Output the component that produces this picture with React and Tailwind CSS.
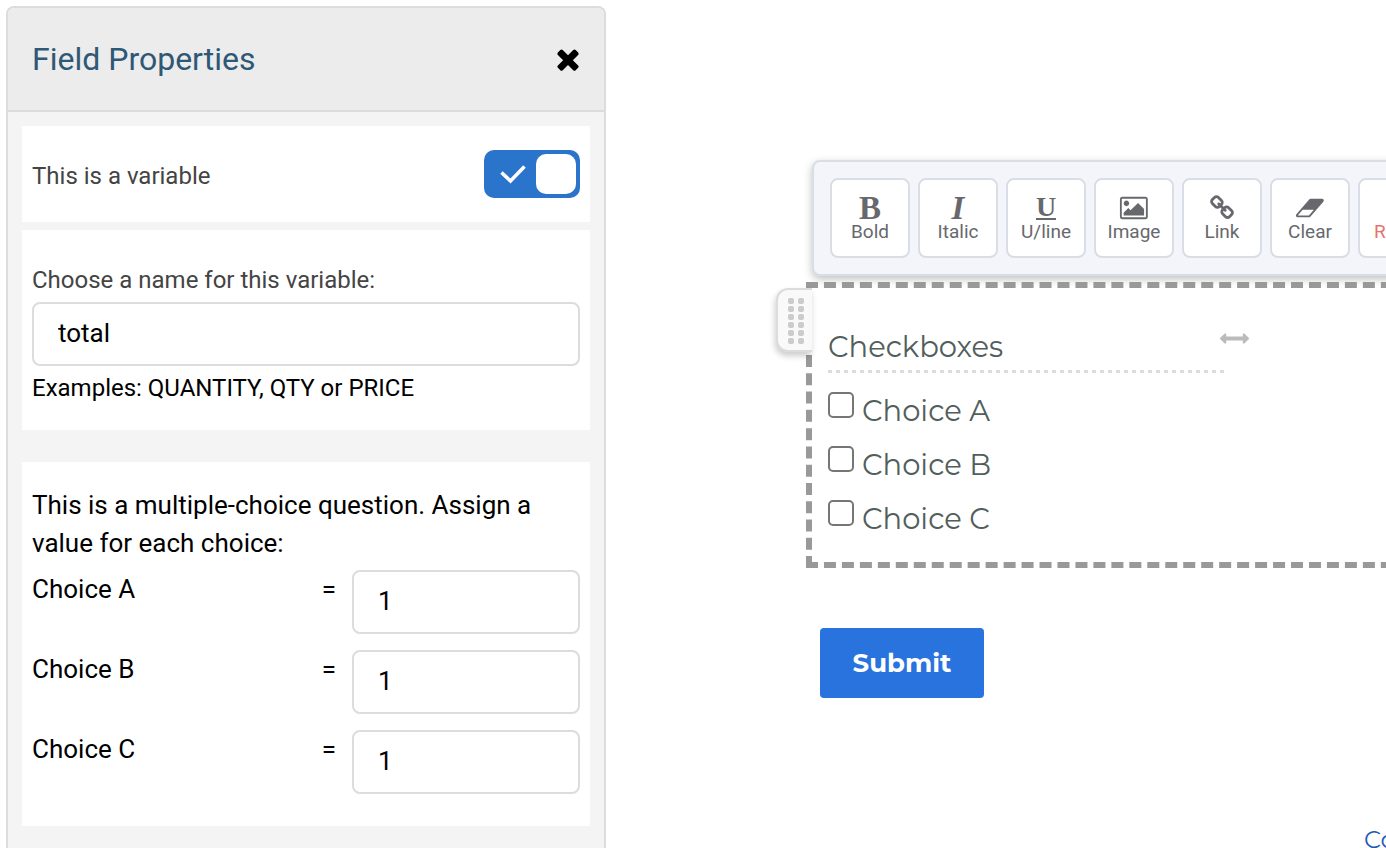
import React, { useState } from "react";
import { FaUndo } from "react-icons/fa";

const iconPaths = {
  times: {
    box: "0 0 1792 1792",
    d: "M1490 1322q0 40-28 68l-136 136q-28 28-68 28t-68-28l-294-294-294 294q-28 28-68 28t-68-28l-136-136q-28-28-28-68t28-68l294-294-294-294q-28-28-28-68t28-68l136-136q28-28 68-28t68 28l294 294 294-294q28-28 68-28t68 28l136 136q28 28 28 68t-28 68l-294 294 294 294q28 28 28 68z",
  },
  image: {
    box: "0 0 2048 1792",
    d: "M704 576q0 80-56 136t-136 56-136-56-56-136 56-136 136-56 136 56 56 136zm1024 384v448h-1408v-192l320-320 160 160 512-512zm96-704h-1600q-13 0-22.5 9.5t-9.5 22.5v1216q0 13 9.5 22.5t22.5 9.5h1600q13 0 22.5-9.5t9.5-22.5v-1216q0-13-9.5-22.5t-22.5-9.5zm160 32v1216q0 66-47 113t-113 47h-1600q-66 0-113-47t-47-113v-1216q0-66 47-113t113-47h1600q66 0 113 47t47 113z",
  },
  link: {
    box: "0 0 1792 1792",
    d: "M1520 1216q0-40-28-68l-208-208q-28-28-68-28-42 0-72 32 3 3 19 18.5t21.5 21.5 15 19 13 25.5 3.5 27.5q0 40-28 68t-68 28q-15 0-27.5-3.5t-25.5-13-19-15-21.5-21.5-18.5-19q-33 31-33 73 0 40 28 68l206 207q27 27 68 27 40 0 68-26l147-146q28-28 28-67zm-703-705q0-40-28-68l-206-207q-28-28-68-28-39 0-68 27l-147 146q-28 28-28 67 0 40 28 68l208 208q27 27 68 27 42 0 72-31-3-3-19-18.5t-21.5-21.5-15-19-13-25.5-3.5-27.5q0-40 28-68t68-28q15 0 27.5 3.5t25.5 13 19 15 21.5 21.5 18.5 19q33-31 33-73zm895 705q0 120-85 203l-147 146q-83 83-203 83-121 0-204-85l-206-207q-83-83-83-203 0-123 88-209l-88-88q-86 88-208 88-120 0-204-84l-208-208q-84-84-84-204t85-203l147-146q83-83 203-83 121 0 204 85l206 207q83 83 83 203 0 123-88 209l88 88q86-88 208-88 120 0 204 84l208 208q84 84 84 204z",
  },
  eraser: {
    box: "0 0 2048 1792",
    d: "M960 1408l336-384h-768l-336 384h768zm1013-1077q15 34 9.5 71.5t-30.5 65.5l-896 1024q-38 44-96 44h-768q-38 0-69.5-20.5t-47.5-54.5q-15-34-9.5-71.5t30.5-65.5l896-1024q38-44 96-44h768q38 0 69.5 20.5t47.5 54.5z",
  },
  arrows: {
    box: "0 0 1792 1792",
    d: "M1792 896q0 26-19 45l-256 256q-19 19-45 19t-45-19-19-45v-128h-1024v128q0 26-19 45t-45 19-45-19l-256-256q-19-19-19-45t19-45l256-256q19-19 45-19t45 19 19 45v128h1024v-128q0-26 19-45t45-19 45 19l256 256q19 19 19 45z",
  },
};

const Icon = ({ name, className }) => (
  <svg
    viewBox={iconPaths[name].box}
    className={className}
    fill="currentColor"
    aria-hidden="true"
  >
    <path d={iconPaths[name].d} />
  </svg>
);

const serif = "font-['Liberation_Serif',serif] font-bold leading-6";

const tools = [
  { label: "Bold", icon: <span className={`${serif} text-[33px]`}>B</span> },
  {
    label: "Italic",
    icon: <span className={`${serif} text-[33px] italic`}>I</span>,
  },
  {
    label: "U/line",
    icon: (
      <span className={`${serif} border-b-2 text-[28px] leading-[22px]`}>
        U
      </span>
    ),
  },
  { label: "Image", icon: <Icon name="image" className="h-[26px]" /> },
  { label: "Link", icon: <Icon name="link" className="h-[26px]" /> },
  { label: "Clear", icon: <Icon name="eraser" className="h-[26px]" /> },
  { label: "Reset", icon: <FaUndo size={20} />, danger: true },
];

const choices = ["Choice A", "Choice B", "Choice C"];

const inputStyle =
  "block h-16 w-full min-w-0 rounded-lg border-2 border-[#dcdcdc] bg-white px-6 pb-0.5 text-[26px] text-black outline-none";

const FieldProperties = () => {
  const [isVariable, setIsVariable] = useState(true);
  const [name, setName] = useState("total");
  const [values, setValues] = useState(["1", "1", "1"]);

  const updateValue = (index, value) => {
    setValues(values.map((v, i) => (i === index ? value : v)));
  };

  return (
    <aside className="mt-1.5 ml-1.5 w-[600px] shrink-0 rounded-t-lg border-2 border-b-0 border-[#dcdcdc] bg-[#f4f4f4]">
      <header className="flex h-[104px] items-center justify-between rounded-t-md border-b-2 border-[#dcdcdc] bg-[#ececec] px-6">
        <h2 className="text-[32px] text-[#2e5876]">Field Properties</h2>
        <button type="button" aria-label="Close" className="-mr-1 text-black">
          <Icon name="times" className="size-8" />
        </button>
      </header>

      <div className="p-3.5">
        <section className="flex h-24 items-center justify-between bg-white px-2.5">
          <label htmlFor="is-variable" className="pt-1 text-2xl text-[#444]">
            This is a variable
          </label>
          <label className="relative flex h-12 w-24 cursor-pointer items-center justify-between rounded-[10px] bg-[#2a74cc] p-1">
            <input
              id="is-variable"
              type="checkbox"
              className="absolute inset-0 opacity-0"
              checked={isVariable}
              onChange={(e) => setIsVariable(e.target.checked)}
            />
            <svg
              viewBox="0 0 26 20"
              className="ml-3 w-[26px]"
              fill="none"
              stroke="#fff"
              strokeWidth="3.6"
              aria-hidden="true"
            >
              <path d="M1.5 8.5 L10.5 17 L24.5 2.5" />
            </svg>
            <span className="size-10 rounded-[10px] bg-white" />
          </label>
        </section>

        <section className="mt-2 bg-white px-2.5 pt-8 pb-6">
          <label
            htmlFor="variable-name"
            className="mb-1 block text-2xl leading-9 text-[#444]"
          >
            Choose a name for this variable:
          </label>
          <input
            id="variable-name"
            type="text"
            className={inputStyle}
            value={name}
            onChange={(e) => setName(e.target.value)}
          />
          <p className="mt-1 text-2xl leading-9">
            Examples: QUANTITY, QTY or PRICE
          </p>
        </section>

        <section className="mt-8 bg-white px-2.5 pt-6 pb-8 text-[26px] leading-[38px]">
          <p className="mb-2">
            This is a multiple-choice question. Assign a value for each choice:
          </p>
          <div className="space-y-4">
            {choices.map((choice, index) => (
              <div key={choice} className="flex">
                <label htmlFor={`value-${index}`} className="flex-1">
                  {choice}
                </label>
                <span className="w-[46px] text-center">=</span>
                <div className="w-[228px]">
                  <input
                    id={`value-${index}`}
                    type="text"
                    className={inputStyle}
                    value={values[index]}
                    onChange={(e) => updateValue(index, e.target.value)}
                  />
                </div>
              </div>
            ))}
          </div>
        </section>
      </div>
    </aside>
  );
};

const Toolbar = () => (
  <div className="ml-1.5 flex w-max gap-2 rounded-lg border-2 border-[#d9dde6] bg-[#f4f5fa] p-4 shadow-[0_3px_8px_rgba(0,0,0,0.25)]">
    {tools.map((tool) => (
      <button
        key={tool.label}
        type="button"
        className={`flex size-20 flex-col items-center rounded-lg border-2 border-[#d9dde6] bg-white pt-4 text-[19px] leading-6 ${
          tool.danger ? "text-[#e5746c]" : "text-[#67686c]"
        }`}
      >
        <span className="flex h-6 items-center">{tool.icon}</span>
        {tool.label}
      </button>
    ))}
  </div>
);

const FormCanvas = () => (
  <main className="min-w-0 flex-1 overflow-hidden pt-40 pl-[200px] font-[Montserrat,Inter,sans-serif]">
    <div className="w-[1000px]">
      <div className="font-[Roboto,sans-serif]">
        <Toolbar />
      </div>

      <div className="relative mt-1.5 border-6 border-dashed border-[#999] px-4 pt-9 pb-4 text-[#525e5b]">
        <button
          type="button"
          aria-label="Move field"
          className="absolute top-0 -left-9 grid h-16 w-9 grid-cols-[6px_6px] content-center justify-center gap-x-1 gap-y-0.5 rounded-l-xl border-2 border-r-0 border-[#dcdcdc] bg-[#f9f9f9] pt-0.5 pl-0.5 shadow-[-1px_4px_6px_rgba(0,0,0,0.2)]"
        >
          {Array.from({ length: 12 }, (_, i) => (
            <span key={i} className="size-1.5 rounded-xs bg-[#ccc]" />
          ))}
        </button>

        <div className="relative w-[400px]">
          <h3 className="text-[29px] leading-[46px]">Checkboxes</h3>
          <div className="h-[3px] bg-[repeating-linear-gradient(90deg,#ddd_0_4px,transparent_4px_8px)]" />
          <Icon
            name="arrows"
            className="absolute top-0 -right-[21px] w-[29px] text-[#bbb]"
          />
        </div>

        <div className="pt-[11px]">
          {choices.map((choice) => (
            <label
              key={choice}
              className="flex h-[54px] items-start gap-2 text-[29px] leading-[54px]"
            >
              <input
                type="checkbox"
                className="mt-2 size-[26px] appearance-none rounded-[5px] border-2 border-[#767676] bg-white checked:bg-[#2a74cc]"
              />
              {choice}
            </label>
          ))}
        </div>
      </div>

      <button
        type="button"
        className="mt-15 ml-3.5 h-[70px] w-[164px] rounded-sm bg-[#2873de] text-[26px] font-bold text-white"
      >
        Submit
      </button>

      <footer className="mt-32 pl-[558px]">
        <a href="#contact" className="text-2xl leading-7 text-[#1f5bb5]">
          Contact
        </a>
      </footer>
    </div>
  </main>
);

const App = () => {
  return (
    <div className="flex h-screen overflow-hidden bg-white font-[Roboto,sans-serif] text-black">
      <FieldProperties />
      <FormCanvas />
    </div>
  );
};

export default App;
